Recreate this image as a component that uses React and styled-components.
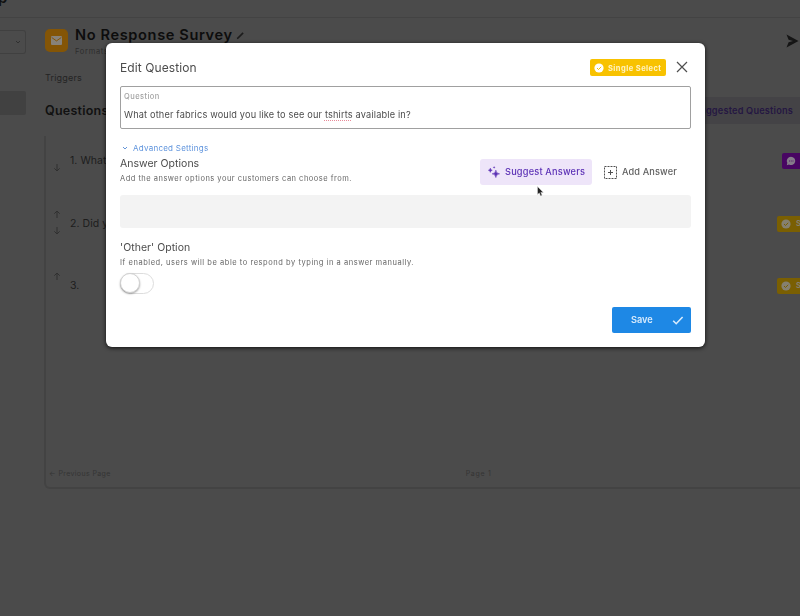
import React, { useState } from 'react'
import styled, { createGlobalStyle } from 'styled-components'

const COLORS = {
  PAGE: '#4b4b4b',
  LINE: '#434343',
  DARK: '#111',
  MUTED: '#2d2d2d',
  TEXT: '#4c4c4c',
  BLUE: '#1e88e5',
  PURPLE: '#5b30b5',
  YELLOW: '#f8c200'
}

const GlobalStyle = createGlobalStyle`
  * {
    box-sizing: border-box;
  }

  body {
    margin: 0;
    overflow: hidden;
    background: ${COLORS.PAGE};
    font-family: Inter, "Liberation Sans", sans-serif;
  }

  button {
    font-family: inherit;
    border: none;
    padding: 0;
    background: none;
  }

  svg {
    flex: none;
  }
`

const Text = styled.div`
  font-size: ${props => props.$size}px;
  line-height: ${props => props.$line || 16}px;
  font-weight: ${props => props.$weight || 400};
  letter-spacing: ${props => props.$spacing || 0}px;
  color: ${props => props.$color || COLORS.TEXT};
  white-space: nowrap;
`

const Page = styled.div`
  width: 800px;
  height: 616px;
  overflow: hidden;
  display: flex;
  flex-direction: column;
`

const TopBar = styled.header`
  flex: none;
  height: 18px;
  overflow: hidden;
  border-bottom: 1px solid ${COLORS.LINE};
`

const Logo = styled.div`
  margin: -11px 0 0 -2px;
  font-size: 15px;
  line-height: 18px;
  font-weight: 600;
  color: ${COLORS.DARK};
`

const Columns = styled.div`
  display: flex;
  flex: 1;
`

const Sidebar = styled.nav`
  flex: none;
  width: 26px;
  padding-top: 12px;
`

const SideSelect = styled.div`
  height: 24px;
  border: 1px solid #404040;
  border-left: none;
  border-radius: 0 3px 3px 0;
  display: flex;
  align-items: center;
  justify-content: flex-end;
  padding-right: 4px;
`

const SideItem = styled.div`
  height: 24px;
  margin-top: 37px;
  background: #414141;
  border-radius: 0 2px 2px 0;
`

const Main = styled.main`
  flex: none;
  width: 776px;
  margin-left: 18px;
`

const SurveyHeader = styled.div`
  display: flex;
  height: 53px;
  padding-top: 7px;
`

const MailBadge = styled.div`
  width: 23px;
  height: 23px;
  margin: 4px 7px 0 1px;
  border-radius: 5px;
  background: #845506;
  display: flex;
  align-items: center;
  justify-content: center;
`

const TitleRow = styled.div`
  display: flex;
  align-items: center;
  gap: 3px;
`

const SendIcon = styled.svg`
  margin: 9px 21px 0 auto;
`

const Triggers = styled(Text)`
  padding-left: 1px;
`

const QuestionsBar = styled.div`
  display: flex;
  align-items: center;
  justify-content: space-between;
  height: 27px;
  margin-top: 13px;
  padding-left: 1px;
`

const SuggestedButton = styled.div`
  width: 144px;
  height: 27px;
  padding-right: 27px;
  display: flex;
  align-items: center;
  justify-content: flex-end;
  background: #444346;
  border-radius: 3px;
`

const Panel = styled.section`
  margin-top: 12px;
  height: 353px;
  border: 2px solid ${COLORS.LINE};
  border-top: none;
  border-radius: 0 0 0 6px;
  display: flex;
  flex-direction: column;
`

const QuestionRow = styled.div`
  display: flex;
  height: 50px;
  margin-bottom: 12.5px;
  padding-left: 7px;
  align-items: center;
`

const Arrows = styled.div`
  width: 17px;
  height: 28px;
  padding-bottom: 3px;
  display: flex;
  flex-direction: column;
  justify-content: space-between;
`

const TypeTag = styled.div`
  flex: none;
  margin-left: auto;
  width: ${props => props.$width}px;
  height: 16px;
  border-radius: 2px;
  background: ${props => props.$bg};
  display: flex;
  align-items: center;
  gap: 5px;
  padding-left: 4px;
`

const Pager = styled.div`
  display: flex;
  margin-top: auto;
  padding: 0 0 7px 3px;
`

const PageNumber = styled(Text)`
  margin-left: 355px;
`

const Overlay = styled.div`
  position: fixed;
  inset: 0;
  padding: 43px 0 0 106px;
`

const Modal = styled.div`
  width: 599px;
  height: 304px;
  padding: 14px;
  border-radius: 6px;
  background: #fff;
  box-shadow: 0 1px 4px rgba(0, 0, 0, 0.8);
  display: flex;
  flex-direction: column;
`

const ModalHeader = styled.div`
  display: flex;
  align-items: center;
  height: 21px;
`

const SelectBadge = styled.div`
  width: 76px;
  height: 17px;
  margin-left: auto;
  padding-left: 4px;
  border-radius: 2px;
  background: ${COLORS.YELLOW};
  display: flex;
  align-items: center;
  gap: 4px;
`

const BadgeText = styled(Text)`
  padding-top: 1px;
`

const CloseButton = styled.button`
  width: 12px;
  height: 12px;
  margin: 0 3px 1px 10px;
  display: flex;
`

const QuestionField = styled.div`
  height: 43px;
  margin-top: 8px;
  padding: 2px 3px;
  border: 1px solid #a0a0a0;
  border-radius: 2px;
`

const Misspelled = styled.span`
  text-decoration: underline dotted #e88a98 1px;
  text-underline-offset: 2px;
`

const AdvancedLink = styled.div`
  display: flex;
  align-items: center;
  gap: 5px;
  height: 14px;
  margin-top: 12px;
  padding-left: 2px;
`

const OptionsRow = styled.div`
  display: flex;
  height: 38px;
  padding-top: 1px;
`

const SuggestButton = styled.button`
  width: 112px;
  height: 26px;
  margin: 3px 0 0 auto;
  padding-left: 8px;
  border-radius: 3px;
  background: #eee5f9;
  display: flex;
  align-items: center;
  gap: 5px;
`

const AddButton = styled.button`
  width: 99px;
  height: 26px;
  margin-top: 3px;
  padding-left: 12px;
  display: flex;
  align-items: center;
  gap: 5px;
`

const AnswerList = styled.div`
  height: 33px;
  margin-top: 2px;
  background: #f3f3f3;
  border-radius: 3px;
`

const OtherOption = styled.div`
  margin-top: 12px;
`

const SwitchTrack = styled.button`
  display: block;
  width: 34px;
  height: 21px;
  margin-top: 4px;
  border: 1px solid #ddd;
  border-radius: 11px;
  background: ${props => props.$on ? COLORS.BLUE : '#fff'};
`

const SwitchKnob = styled.span`
  display: block;
  width: 20px;
  height: 20px;
  margin: -1px 0 0 ${props => props.$on ? 13 : -1}px;
  border-radius: 50%;
  border: 1px solid #d2d2d2;
  background: #fff;
  box-shadow: 0 1px 2px rgba(0, 0, 0, 0.35);
`

const SaveButton = styled.button`
  width: 79px;
  height: 26px;
  margin: auto 0 0 auto;
  padding: 0 7px 0 19px;
  border-radius: 2px;
  background: ${COLORS.BLUE};
  display: flex;
  align-items: center;
  justify-content: space-between;
`

const Cursor = styled.svg`
  position: fixed;
  left: 537px;
  top: 186px;
`

const Chevron = ({ color, size = 6 }) => (
  <svg width={size} height={size} viewBox="0 0 6 6" fill="none" stroke={color}>
    <path d="M1 2l2 2 2-2" />
  </svg>
)

const Arrow = ({ up }) => (
  <svg width="8" height="8" viewBox="0 0 8 8" fill="none" stroke="#303030">
    {up ? <path d="M4 8V1M1.3 3.7L4 1l2.7 2.7" /> : <path d="M4 0v7M1.3 4.3L4 7l2.7-2.7" />}
  </svg>
)

const CheckCircle = ({ fill, mark }) => (
  <svg width="10" height="10" viewBox="0 0 10 10">
    <circle cx="5" cy="5" r="4.6" fill={fill} />
    <path d="M3 5l1.5 1.5L7.2 3.8" fill="none" stroke={mark} />
  </svg>
)

const Sparkles = () => (
  <svg width="12" height="12" viewBox="0 0 13 13" fill={COLORS.PURPLE}>
    <path d="M8.5 4.5Q8.8 8.2 12.5 8.5Q8.8 8.8 8.5 12.5Q8.2 8.8 4.5 8.5Q8.2 8.2 8.5 4.5Z" stroke={COLORS.PURPLE} strokeWidth=".6" />
    <path d="M2.5 2.2Q2.7 4.4 4.7 4.6Q2.7 4.8 2.5 7Q2.3 4.8.3 4.6Q2.3 4.4 2.5 2.2Z" stroke={COLORS.PURPLE} strokeWidth=".4" />
    <path d="M6.6 0l.4 1.1 1.1.4-1.1.4-.4 1.1-.4-1.1-1.1-.4 1.1-.4z" />
  </svg>
)

const questions = [
  { text: '1. What', down: true, chat: true },
  { text: '2. Did y', up: true, down: true },
  { text: '3.', up: true }
]

const Question = ({ text, up, down, chat }) => (
  <QuestionRow>
    <Arrows>
      {up ? <Arrow up /> : <span />}
      {down && <Arrow />}
    </Arrows>
    <Text $size={10.5} $color="#1d1d1d" $spacing={0.05}>{text}</Text>
    <TypeTag $width={chat ? 36 : 41} $bg={chat ? '#480662' : '#7a5f02'}>
      {chat
        ? (
          <svg width="10" height="10" viewBox="0 0 10 10">
            <path d="M5 .7a4.2 4.2 0 1 1-2 7.9L.8 9.2l.5-2.4A4.2 4.2 0 0 1 5 .7z" fill="#857c8a" />
            <path d="M3 5h.8M4.8 5h.8M6.6 5h.8" stroke="#480662" />
          </svg>
          )
        : <CheckCircle fill="#858070" mark="#7a5f02" />}
      {!chat && <Text $size={7.5} $weight={700} $color="#858070">S</Text>}
    </TypeTag>
  </QuestionRow>
)

const App = () => {
  const [other, setOther] = useState(false)

  return (
    <>
      <GlobalStyle />
      <Page>
        <TopBar><Logo>p</Logo></TopBar>
        <Columns>
          <Sidebar>
            <SideSelect><Chevron color="#303030" /></SideSelect>
            <SideItem />
          </Sidebar>
          <Main>
            <SurveyHeader>
              <MailBadge>
                <svg width="11" height="9" viewBox="0 0 11 9">
                  <rect width="11" height="9" rx="1" fill="#87827a" />
                  <path d="M.7 1.5l4.8 3.4 4.8-3.4" fill="none" stroke="#845506" />
                </svg>
              </MailBadge>
              <div>
                <TitleRow>
                  <Text $size={14.6} $weight={600} $line={20} $spacing={0.62} $color="#0d0d0d">No Response Survey</Text>
                  <svg width="9" height="9" viewBox="0 0 9 9">
                    <path d="M.8 8.3l.5-1.7L6.6 1.3l1.1 1.1-5.3 5.3z" fill="#1c1c1c" />
                  </svg>
                </TitleRow>
                <Text $size={7.5} $line={13} $spacing={0.7} $color={COLORS.MUTED}>Formats</Text>
              </div>
              <SendIcon width="13" height="14" viewBox="0 0 13 14">
                <path d="M.5.5L12.5 7 .5 13.5 2.6 8.2 7 7 2.6 5.8z" fill="#151515" />
              </SendIcon>
            </SurveyHeader>
            <Triggers $size={9} $line={13} $spacing={0.2} $color="#242424">Triggers</Triggers>
            <QuestionsBar>
              <Text $size={12.5} $weight={600} $spacing={0.25} $color={COLORS.DARK}>Questions</Text>
              <SuggestedButton>
                <Text $size={9.2} $weight={600} $spacing={0.2} $color="#251742">Suggested Questions</Text>
              </SuggestedButton>
            </QuestionsBar>
            <Panel>
              {questions.map(q => <Question key={q.text} {...q} />)}
              <Pager>
                <Text $size={7} $line={12} $spacing={0.38} $color="#343434">← Previous Page</Text>
                <PageNumber $size={7} $line={12} $spacing={0.7} $color="#343434">Page 1</PageNumber>
              </Pager>
            </Panel>
          </Main>
        </Columns>
      </Page>
      <Overlay>
        <Modal>
          <ModalHeader>
            <Text $size={12} $line={18} $spacing={0.1}>Edit Question</Text>
            <SelectBadge>
              <CheckCircle fill="#fff" mark={COLORS.YELLOW} />
              <BadgeText $size={7.5} $line={15} $weight={700} $spacing={0.45} $color="#fff3c4">Single Select</BadgeText>
            </SelectBadge>
            <CloseButton aria-label="Close">
              <svg width="12" height="12" viewBox="0 0 12 12" stroke="#4f4f4f" strokeWidth="1.2">
                <path d="M1 1l10 10M11 1L1 11" />
              </svg>
            </CloseButton>
          </ModalHeader>
          <QuestionField>
            <Text $size={7.5} $line={15} $spacing={0.45} $weight={500} $color="#a3a3a3">Question</Text>
            <Text $size={9.2} $line={22} $spacing={0.16}>
              What other fabrics would you like to see our <Misspelled>tshirts</Misspelled> available in?
            </Text>
          </QuestionField>
          <AdvancedLink>
            <Chevron color="#6495d8" />
            <Text $size={8} $line={14} $spacing={0.25} $color="#5f94dd">Advanced Settings</Text>
          </AdvancedLink>
          <OptionsRow>
            <div>
              <Text $size={10.5} $spacing={0.02}>Answer Options</Text>
              <Text $size={7.5} $line={13} $spacing={0.49} $color="#666">Add the answer options your customers can choose from.</Text>
            </div>
            <SuggestButton>
              <Sparkles />
              <Text $size={9.2} $weight={500} $spacing={0.2} $color={COLORS.PURPLE}>Suggest Answers</Text>
            </SuggestButton>
            <AddButton>
              <svg width="13" height="13" viewBox="0 0 13 13" fill="none" stroke="#505050">
                <rect x=".5" y=".5" width="12" height="12" strokeDasharray="2 1" />
                <path d="M6.5 4v5M4 6.5h5" />
              </svg>
              <Text $size={9.2} $weight={500} $spacing={0.12} $color="#606060">Add Answer</Text>
            </AddButton>
          </OptionsRow>
          <AnswerList />
          <OtherOption>
            <Text $size={10.5} $spacing={0.02}>'Other' Option</Text>
            <Text $size={7.5} $line={13} $spacing={0.54} $color="#666">If enabled, users will be able to respond by typing in a answer manually.</Text>
            <SwitchTrack role="switch" aria-checked={other} $on={other} onClick={() => setOther(!other)}>
              <SwitchKnob $on={other} />
            </SwitchTrack>
          </OtherOption>
          <SaveButton>
            <Text $size={9.2} $weight={600} $color="#d9ebfc">Save</Text>
            <svg width="12" height="9" viewBox="0 0 12 9" fill="none" stroke="#d9ebfc" strokeWidth="1.6">
              <path d="M1.2 4.7l3 3L10.6 1" />
            </svg>
          </SaveButton>
        </Modal>
      </Overlay>
      <Cursor width="7" height="11" viewBox="0 0 7 11">
        <path d="M.5.5v8l1.8-1.6 1.3 3 1.5-.7-1.3-2.8h2.5z" fill="#222" stroke="#ddd" strokeWidth=".5" />
      </Cursor>
    </>
  )
}

export default App
